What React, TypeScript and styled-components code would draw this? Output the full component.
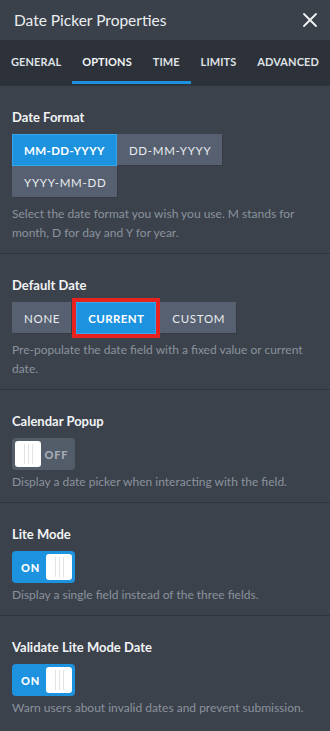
import styled, { createGlobalStyle } from 'styled-components';
import { useState } from 'react';

const GlobalStyle = createGlobalStyle`
  html, body {
    margin: 0;
    padding: 0;
    background: #3b424c;
  }
  * {
    box-sizing: border-box;
  }
  body {
    font-family: Lato, "Open Sans", "Liberation Sans", sans-serif;
    -webkit-font-smoothing: antialiased;
  }
`;

const Panel = styled.div`
  width: 330px;
  min-height: 731px;
  background: #3b424c;
  display: flex;
  flex-direction: column;
`;

const Header = styled.div`
  height: 40px;
  background: #3a414b;
  display: flex;
  align-items: center;
  justify-content: space-between;
  padding: 0 12px 0 14px;
`;

const Title = styled.h1`
  margin: 0;
  font-size: 15.5px;
  font-weight: 400;
  color: #eceef1;
`;

const CloseButton = styled.button`
  background: none;
  border: none;
  padding: 0;
  width: 16px;
  height: 16px;
  display: flex;
  cursor: pointer;
`;

const TabBar = styled.div`
  position: relative;
  height: 46px;
  background: #2d3139;
  display: flex;
  align-items: center;
  justify-content: space-between;
  padding: 0 11px 2px 11px;
  border-bottom: 1px solid #30353d;
`;

const Tab = styled.div<{ $active?: boolean }>`
  font-size: 11px;
  font-weight: 700;
  letter-spacing: 0.1px;
  color: ${(p) => (p.$active ? '#f2f4f6' : '#dfe2e6')};
  text-transform: uppercase;
  cursor: pointer;
`;

const TabIndicator = styled.div`
  position: absolute;
  left: 72px;
  bottom: 1px;
  width: 119px;
  height: 3px;
  background: #1c91de;
`;

const Section = styled.section`
  padding: 22px 12px 11px;
  border-bottom: 1px solid #30353d;

  &:last-child {
    border-bottom: none;
  }
`;

const Label = styled.div`
  font-size: 13px;
  font-weight: 700;
  line-height: 18px;
  color: #f1f3f5;
  margin-bottom: 8px;
`;

const ButtonGroup = styled.div`
  display: flex;
  flex-wrap: wrap;
  width: 240px;
  margin-bottom: 6px;
`;

const OptionButton = styled.button<{ $active?: boolean; $outlined?: boolean }>`
  height: 32px;
  padding: 0 11px;
  font-family: inherit;
  font-size: 11.5px;
  font-weight: ${(p) => (p.$active ? 700 : 400)};
  letter-spacing: ${(p) => (p.$active ? '0.4px' : '0.7px')};
  color: ${(p) => (p.$active ? '#ffffff' : '#e9ecef')};
  background: ${(p) => (p.$active ? '#1d92df' : '#566070')};
  border: 1px solid ${(p) => (p.$active ? '#3aa4ea' : '#566070')};
  border-right-color: ${(p) => (p.$active ? '#3aa4ea' : '#363b43')};
  border-bottom-color: ${(p) => (p.$active ? '#3aa4ea' : '#363b43')};
  cursor: pointer;
  ${(p) =>
    p.$outlined &&
    `
    outline: 4px solid #e8231f;
    outline-offset: 0;
    position: relative;
    z-index: 1;
    margin: 0 4px;
  `}
`;

const Description = styled.p`
  margin: 0;
  font-size: 12px;
  line-height: 19px;
  color: #8b929d;
`;

const ToggleTrack = styled.button<{ $on: boolean }>`
  width: 63px;
  height: 32px;
  padding: 3px;
  border: none;
  border-radius: 4px;
  background: ${(p) => (p.$on ? '#1d92df' : '#535c69')};
  display: flex;
  flex-direction: ${(p) => (p.$on ? 'row-reverse' : 'row')};
  align-items: center;
  cursor: pointer;
  margin-bottom: 2px;
`;

const ToggleKnob = styled.span`
  width: 26px;
  height: 26px;
  border-radius: 3px;
  background: #ffffff;
  display: flex;
  align-items: center;
  justify-content: center;
  gap: 3px;
`;

const Grip = styled.span`
  width: 1px;
  height: 20px;
  background: #e1e3e6;
`;

const ToggleText = styled.span<{ $on: boolean }>`
  flex: 1;
  text-align: center;
  font-family: Lato, "Open Sans", sans-serif;
  font-size: 11px;
  font-weight: 900;
  letter-spacing: 0.8px;
  color: ${(p) => (p.$on ? '#ffffff' : '#a6adb7')};
`;

const Toggle = ({ on, onChange }: { on: boolean; onChange: () => void }) => (
  <ToggleTrack $on={on} onClick={onChange}>
    <ToggleKnob>
      <Grip />
      <Grip />
      <Grip />
    </ToggleKnob>
    <ToggleText $on={on}>{on ? 'ON' : 'OFF'}</ToggleText>
  </ToggleTrack>
);

const tabs = ['General', 'Options', 'Time', 'Limits', 'Advanced'];

const App = () => {
  const [format, setFormat] = useState('MM-DD-YYYY');
  const [defaultDate, setDefaultDate] = useState('CURRENT');
  const [popup, setPopup] = useState(false);
  const [lite, setLite] = useState(true);
  const [validate, setValidate] = useState(true);

  return (
    <>
      <GlobalStyle />
      <Panel>
        <Header>
          <Title>Date Picker Properties</Title>
          <CloseButton aria-label="Close">
            <svg width="16" height="16" viewBox="0 0 16 16">
              <path d="M2 2L14 14M14 2L2 14" stroke="#f3f4f6" strokeWidth="1.8" strokeLinecap="round" />
            </svg>
          </CloseButton>
        </Header>

        <TabBar>
          {tabs.map((t) => (
            <Tab key={t} $active={t === 'Options'}>
              {t}
            </Tab>
          ))}
          <TabIndicator />
        </TabBar>

        {/* 날짜 형식 */}
        <Section>
          <Label>Date Format</Label>
          <ButtonGroup>
            {['MM-DD-YYYY', 'DD-MM-YYYY', 'YYYY-MM-DD'].map((f) => (
              <OptionButton key={f} $active={format === f} onClick={() => setFormat(f)}>
                {f}
              </OptionButton>
            ))}
          </ButtonGroup>
          <Description>
            Select the date format you wish you use. M stands for month, D for day and Y for year.
          </Description>
        </Section>

        {/* 기본 날짜 */}
        <Section>
          <Label>Default Date</Label>
          <ButtonGroup>
            {['NONE', 'CURRENT', 'CUSTOM'].map((d) => (
              <OptionButton
                key={d}
                $active={defaultDate === d}
                $outlined={d === 'CURRENT'}
                onClick={() => setDefaultDate(d)}
              >
                {d}
              </OptionButton>
            ))}
          </ButtonGroup>
          <Description>Pre-populate the date field with a fixed value or current date.</Description>
        </Section>

        <Section>
          <Label>Calendar Popup</Label>
          <Toggle on={popup} onChange={() => setPopup(!popup)} />
          <Description>Display a date picker when interacting with the field.</Description>
        </Section>

        <Section>
          <Label>Lite Mode</Label>
          <Toggle on={lite} onChange={() => setLite(!lite)} />
          <Description>Display a single field instead of the three fields.</Description>
        </Section>

        <Section>
          <Label>Validate Lite Mode Date</Label>
          <Toggle on={validate} onChange={() => setValidate(!validate)} />
          <Description>Warn users about invalid dates and prevent submission.</Description>
        </Section>
      </Panel>
    </>
  );
};

export default App;
